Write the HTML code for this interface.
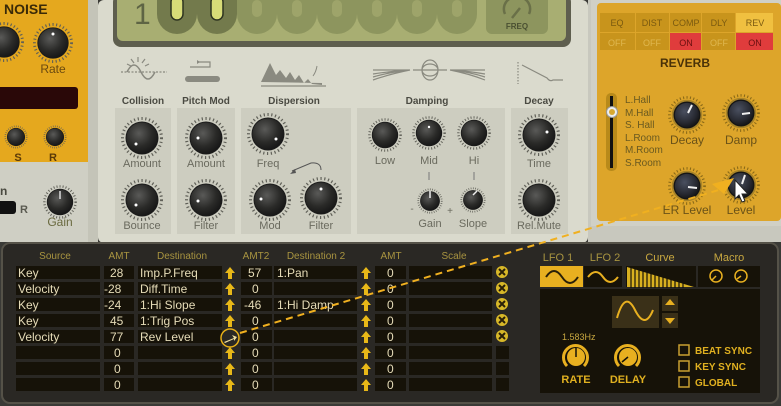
<!DOCTYPE html>
<html><head><meta charset="utf-8"><style>
html,body{margin:0;padding:0;background:#3a3a36;}
svg{display:block}
text{font-family:"Liberation Sans",sans-serif;}
.lb{font-size:11px;fill:#6a6a5e;text-anchor:middle}
.hd{font-size:10px;font-weight:bold;fill:#4a4a42;text-anchor:middle}
.mx{font-family:"Liberation Mono",monospace;font-size:12px;fill:#e6dcb8}
.mh{font-size:10px;fill:#a89440;text-anchor:middle}
.rl{font-size:10px;fill:#6a5a20}
.yl{font-size:11px;fill:#e0b020;font-weight:bold}
</style></head><body>
<svg width="781" height="406" viewBox="0 0 781 406" xmlns="http://www.w3.org/2000/svg">
<defs>
<radialGradient id="kb" cx="0.4" cy="0.35" r="0.7"><stop offset="0" stop-color="#5a5a58"/><stop offset="0.6" stop-color="#2a2a28"/><stop offset="1" stop-color="#151515"/></radialGradient>
<radialGradient id="kr" cx="0.4" cy="0.35" r="0.7"><stop offset="0" stop-color="#4a5060"/><stop offset="0.7" stop-color="#262830"/><stop offset="1" stop-color="#141414"/></radialGradient>
<g id="k"><circle r="19.5" fill="none" stroke="#606058" stroke-width="3" stroke-dasharray="1.2 2.6"/><circle r="16.5" fill="#1a1a1a"/><circle r="15.5" fill="url(#kb)"/></g>
<g id="ky"><circle r="19.5" fill="none" stroke="#8a6a18" stroke-width="3" stroke-dasharray="1.2 2.6"/><circle r="17" fill="#a88428"/><circle r="15" fill="#151515"/><circle r="13.5" fill="url(#kr)"/></g>
</defs>
<rect width="781" height="406" fill="#3a3a36"/>
<rect x="0" y="0" width="98" height="242" fill="#cfcfc4"/>
<rect x="0" y="0" width="88" height="162" fill="#e5a81e"/>
<rect x="88" y="0" width="10" height="242" fill="#c4c4b8"/>
<text x="4" y="14" style="font-size:14px;font-weight:bold;fill:#3a2a08">NOISE</text>
<use href="#k" transform="translate(4,42) scale(0.95)"/>
<use href="#k" transform="translate(53,43) scale(0.95)"/>
<circle cx="53" cy="34" r="1.5" fill="#fff"/>
<text x="53" y="73" class="lb" style="fill:#6a4a10;font-size:12px">Rate</text>
<rect x="-4" y="87" width="82" height="22" rx="3" fill="#2a0808"/>
<use href="#k" transform="translate(16,137) scale(0.55)"/>
<use href="#k" transform="translate(55,137) scale(0.55)"/>
<text x="18" y="161" class="lb" style="fill:#5a3a08;font-weight:bold">S</text>
<text x="53" y="161" class="lb" style="fill:#5a3a08;font-weight:bold">R</text>
<text x="0" y="195" style="font-size:12px;font-weight:bold;fill:#4a4a40">n</text>
<rect x="-4" y="201" width="20" height="13" rx="3" fill="#111"/>
<text x="20" y="213" style="font-size:11px;font-weight:bold;fill:#5a5a50">R</text>
<use href="#k" transform="translate(60,202) scale(0.8)"/>
<line x1="60" y1="191" x2="60" y2="199" stroke="#ddd" stroke-width="1.5"/>
<text x="60" y="226" class="lb" style="fill:#6a6a40;font-size:12px">Gain</text>
<rect x="588" y="0" width="193" height="242" fill="#c8c8be"/>
<rect x="98" y="0" width="490" height="243" rx="6" fill="#dadacd"/>
<rect x="113" y="-6" width="458" height="53" rx="8" fill="#5e5e4e"/>
<rect x="117" y="-6" width="449" height="47" rx="6" fill="#a8ae72"/>
<text x="134" y="24" style="font-size:30px;fill:#5e6444">1</text>
<g fill="#8d955e">
<path d="M237 0h40v14a20 20 0 0 1-40 0z"/><path d="M277 0h40v14a20 20 0 0 1-40 0z"/><path d="M317 0h40v14a20 20 0 0 1-40 0z"/><path d="M357 0h40v14a20 20 0 0 1-40 0z"/><path d="M397 0h40v14a20 20 0 0 1-40 0z"/><path d="M437 0h40v14a20 20 0 0 1-40 0z"/>
</g>
<g fill="#9ea46a"><rect x="252" y="0" width="10" height="17" rx="5"/><rect x="292" y="0" width="10" height="17" rx="5"/><rect x="332" y="0" width="10" height="17" rx="5"/><rect x="372" y="0" width="10" height="17" rx="5"/><rect x="412" y="0" width="10" height="17" rx="5"/><rect x="452" y="0" width="10" height="17" rx="5"/></g>
<path d="M157 0h40v14a20 20 0 0 1-40 0z" fill="#737a4c"/><path d="M197 0h40v14a20 20 0 0 1-40 0z" fill="#737a4c"/>
<rect x="171" y="-4" width="12" height="24" rx="6" fill="#d8dc78" stroke="#2e3420" stroke-width="1.5"/>
<rect x="211" y="-4" width="12" height="24" rx="6" fill="#d8dc78" stroke="#2e3420" stroke-width="1.5"/>
<rect x="486" y="-6" width="62" height="40" rx="6" fill="#8d955e"/>
<path d="M505 14a12 12 0 0 1 6-16M529 14a12 12 0 0 0-6-16M512 18l8-10" stroke="#6a7048" stroke-width="2.5" fill="none"/>
<text x="517" y="29" style="font-size:8px;font-weight:bold;fill:#4a5032" text-anchor="middle">FREQ</text>
<g stroke="#8a8a80" fill="none" stroke-width="1.2">
<path d="M121 72h46" stroke-dasharray="2 1.5"/><path d="M127 72q7-14 14 0t14 0" stroke-width="1.5"/>
<path d="M138 62v-5M134 63l-3-4M142 63l3-4M131 66l-4-2M145 66l4-2"/>
<path d="M190 67h20v-5h-13" />
<path d="M410 70H373M410 70Q392 71 373 74M410 70Q390 72 373 77M410 70Q390 74 373 80"/>
<path d="M413 70h34M422 70a8 6 0 0 1 16 0a8 6 0 0 1-16 0M422 70a8 10 0 0 1 16 0a8 10 0 0 1-16 0"/>
<path d="M450 70h35M450 70Q468 71 485 74M450 70Q470 72 485 77M450 70Q470 74 485 80"/>
<path d="M518 62v22" stroke-dasharray="1.5 1.5"/><path d="M522 65l25 13q3 4 6 2h10" />
<path d="M261 86h65" /></g>
<path d="M200 62l-3-2v4z" fill="#8a8a80"/>
<rect x="185" y="76" width="35" height="6" rx="3" fill="#8a8a80"/>
<path d="M261 82l9-19l6 12l4-5l6 8l4-6l5 8l4-5l5 8l4-4l4 5l10 1v-2z" fill="#8a8a80"/>
<path d="M313 76q3-4 4-10" stroke="#8a8a80" fill="none"/>
<text x="143" y="104" class="hd">Collision</text>
<text x="206" y="104" class="hd">Pitch Mod</text>
<text x="294" y="104" class="hd">Dispersion</text>
<text x="427" y="104" class="hd">Damping</text>
<text x="539" y="104" class="hd">Decay</text>
<g fill="#cdcdc0">
<rect x="115" y="108" width="56" height="126"/><rect x="177" y="108" width="58" height="126"/><rect x="241" y="108" width="110" height="126"/><rect x="357" y="108" width="148" height="126"/><rect x="511" y="108" width="57" height="126"/>
</g>
<use href="#k" transform="translate(142,138)"/><use href="#k" transform="translate(142,200)"/>
<use href="#k" transform="translate(206,138)"/><use href="#k" transform="translate(206,200)"/>
<use href="#k" transform="translate(268,134)"/><use href="#k" transform="translate(270,200)"/><use href="#k" transform="translate(321,198)"/>
<use href="#k" transform="translate(385,135) scale(0.8)"/><use href="#k" transform="translate(429,133) scale(0.8)"/><use href="#k" transform="translate(474,133) scale(0.8)"/>
<use href="#k" transform="translate(430,201) scale(0.6)"/><use href="#k" transform="translate(473,200) scale(0.6)"/>
<use href="#k" transform="translate(539,135)"/><use href="#k" transform="translate(539,200)"/>
<g fill="#fff"><circle cx="136" cy="144" r="1.5"/><circle cx="136" cy="205" r="1.5"/><circle cx="198" cy="138" r="1.5"/><circle cx="198" cy="201" r="1.5"/><circle cx="276" cy="139" r="1.5"/><circle cx="261" cy="199" r="1.5"/><circle cx="321" cy="189" r="1.5"/><circle cx="429" cy="127" r="1.2"/><circle cx="547" cy="132" r="1.5"/></g>
<path d="M430 191v7M473 195l4-4" stroke="#eee" stroke-width="1.5"/>
<text x="142" y="167" class="lb">Amount</text><text x="142" y="229" class="lb">Bounce</text>
<text x="206" y="167" class="lb">Amount</text><text x="206" y="229" class="lb">Filter</text>
<text x="268" y="167" class="lb">Freq</text><text x="270" y="229" class="lb">Mod</text><text x="321" y="229" class="lb">Filter</text>
<path d="M321 170q0-8-10-7l-19 8" stroke="#555" fill="none"/><path d="M290 174l5-5l1 4z" fill="#555"/>
<text x="385" y="164" class="lb">Low</text><text x="429" y="164" class="lb">Mid</text><text x="474" y="164" class="lb">Hi</text>
<path d="M429 180v-8M474 180v-8" stroke="#777"/>
<text x="412" y="212" class="lb" style="font-size:10px">-</text><text x="450" y="214" class="lb" style="font-size:10px">+</text>
<text x="430" y="227" class="lb">Gain</text><text x="473" y="227" class="lb">Slope</text>
<text x="539" y="167" class="lb">Time</text><text x="539" y="229" class="lb">Rel.Mute</text>
<rect x="591" y="0" width="190" height="226" fill="#d0d0c6"/>
<rect x="597" y="3" width="184" height="218" rx="4" fill="#dda52a"/>
<g style="font-size:9px" text-anchor="middle">
<rect x="600" y="13" width="35" height="19" fill="#c8941c"/><text x="617" y="26" fill="#7a5a10">EQ</text>
<rect x="636" y="13" width="33" height="19" fill="#c8941c"/><text x="652" y="26" fill="#7a5a10">DIST</text>
<rect x="670" y="13" width="31" height="19" fill="#c8941c"/><text x="686" y="26" fill="#7a5a10">COMP</text>
<rect x="702" y="13" width="33" height="19" fill="#c8941c"/><text x="719" y="26" fill="#7a5a10">DLY</text>
<rect x="736" y="13" width="37" height="19" fill="#f0c040"/><text x="755" y="26" fill="#7a5a10">REV</text>
<rect x="600" y="33" width="35" height="17" fill="#c8941c"/><text x="617" y="46" fill="#e0b850">OFF</text>
<rect x="636" y="33" width="33" height="17" fill="#c8941c"/><text x="652" y="46" fill="#e0b850">OFF</text>
<rect x="670" y="33" width="31" height="17" fill="#e03c3c"/><text x="686" y="46" fill="#6a1010">ON</text>
<rect x="702" y="33" width="33" height="17" fill="#c8941c"/><text x="719" y="46" fill="#e0b850">OFF</text>
<rect x="736" y="33" width="37" height="17" fill="#e03c3c"/><text x="755" y="46" fill="#6a1010">ON</text>
</g>
<text x="685" y="67" style="font-size:12px;font-weight:bold;fill:#4a3208" text-anchor="middle">REVERB</text>
<rect x="606" y="93" width="11" height="78" rx="5" fill="#b88a1a"/><rect x="610" y="96" width="3" height="72" fill="#111"/>
<circle cx="612" cy="112" r="5.5" fill="#eee" stroke="#999"/><circle cx="612" cy="112" r="3" fill="#d8a830"/>
<text x="625" y="103" class="rl">L.Hall</text><text x="625" y="116" class="rl">M.Hall</text><text x="625" y="128" class="rl">S. Hall</text><text x="625" y="141" class="rl">L.Room</text><text x="625" y="153" class="rl">M.Room</text><text x="625" y="166" class="rl">S.Room</text>
<use href="#ky" transform="translate(687,115) scale(0.9)"/><use href="#ky" transform="translate(741,113) scale(0.9)"/>
<use href="#ky" transform="translate(687,186) scale(0.9)"/><use href="#ky" transform="translate(741,185) scale(0.9)"/>
<path d="M688 113l4-8M742 114l8-1M688 187l9 1M742 184l3-9" stroke="#eee" stroke-width="2"/>
<text x="687" y="144" class="lb" style="fill:#6a5218;font-size:12px">Decay</text><text x="741" y="144" class="lb" style="fill:#6a5218;font-size:12px">Damp</text>
<text x="687" y="214" class="lb" style="fill:#6a5218;font-size:12px">ER Level</text><text x="741" y="214" class="lb" style="fill:#6a5218;font-size:12px">Level</text>
<rect x="2" y="243" width="776" height="160" rx="8" fill="#2a2824" stroke="#555248" stroke-width="2"/>
<text x="55" y="259" class="mh">Source</text><text x="119" y="259" class="mh">AMT</text><text x="182" y="259" class="mh">Destination</text><text x="256" y="259" class="mh">AMT2</text><text x="316" y="259" class="mh">Destination 2</text><text x="391" y="259" class="mh">AMT</text><text x="454" y="259" class="mh">Scale</text>
<g fill="#161208">
<rect x="16" y="266" width="84" height="13"/><rect x="104" y="266" width="30" height="13"/><rect x="138" y="266" width="84" height="13"/><rect x="241" y="266" width="31" height="13"/><rect x="274" y="266" width="83" height="13"/><rect x="375" y="266" width="31" height="13"/><rect x="409" y="266" width="83" height="13"/>
</g>
<g id="rows" fill="#161208">
<rect x="16" y="282" width="84" height="13"/><rect x="104" y="282" width="30" height="13"/><rect x="138" y="282" width="84" height="13"/><rect x="241" y="282" width="31" height="13"/><rect x="274" y="282" width="83" height="13"/><rect x="375" y="282" width="31" height="13"/><rect x="409" y="282" width="83" height="13"/>
</g>
<use href="#rows" y="16"/><use href="#rows" y="32"/><use href="#rows" y="48"/><use href="#rows" y="64"/><use href="#rows" y="80"/><use href="#rows" y="96"/>
<g fill="#161208"><rect x="496" y="346" width="13" height="13"/><rect x="496" y="362" width="13" height="13"/><rect x="496" y="378" width="13" height="13"/></g>
<g class="mx">
<text x="18" y="277">Key</text><text x="110" y="277">28</text><text x="140" y="277">Imp.P.Freq</text><text x="248" y="277">57</text><text x="277" y="277">1:Pan</text><text x="387" y="277">0</text>
<text x="18" y="293">Velocity</text><text x="104" y="293">-28</text><text x="140" y="293">Diff.Time</text><text x="252" y="293">0</text><text x="387" y="293">0</text>
<text x="18" y="309">Key</text><text x="104" y="309">-24</text><text x="140" y="309">1:Hi Slope</text><text x="244" y="309">-46</text><text x="277" y="309">1:Hi Damp</text><text x="387" y="309">0</text>
<text x="18" y="325">Key</text><text x="110" y="325">45</text><text x="140" y="325">1:Trig Pos</text><text x="252" y="325">0</text><text x="387" y="325">0</text>
<text x="18" y="341">Velocity</text><text x="110" y="341">77</text><text x="140" y="341">Rev Level</text><text x="252" y="341">0</text><text x="387" y="341">0</text>
<text x="114" y="357">0</text><text x="252" y="357">0</text><text x="387" y="357">0</text>
<text x="114" y="373">0</text><text x="252" y="373">0</text><text x="387" y="373">0</text>
<text x="114" y="389">0</text><text x="252" y="389">0</text><text x="387" y="389">0</text>
</g>
<g id="ar" fill="#e8b818"><path d="M230 267l-5 6h3v6h4v-6h3z"/><path d="M366 267l-5 6h3v6h4v-6h3z"/></g>
<use href="#ar" y="16"/><use href="#ar" y="32"/><use href="#ar" y="48"/><use href="#ar" y="80"/><use href="#ar" y="96"/><use href="#ar" y="112"/>
<path d="M366 331l-5 6h3v6h4v-6h3z" fill="#e8b818"/>
<path d="M224 342l10-4l-2-3l5 2l-3 4v-2l-9 4z" fill="#f0e0a0"/>
<circle cx="230" cy="338" r="9" fill="none" stroke="#e8b018" stroke-width="1.5"/>
<g id="xb"><circle cx="502" cy="272" r="6" fill="#d8b828"/><path d="M499 269l6 6M505 269l-6 6" stroke="#2a2008" stroke-width="2"/></g>
<use href="#xb" y="16"/><use href="#xb" y="32"/><use href="#xb" y="48"/><use href="#xb" y="64"/>
<text x="558" y="261" class="mh" style="font-size:11px">LFO 1</text><text x="605" y="261" class="mh" style="font-size:11px">LFO 2</text><text x="660" y="261" class="mh" style="font-size:11px;fill:#c8a840">Curve</text><text x="729" y="261" class="mh" style="font-size:11px;fill:#c8a840">Macro</text>
<rect x="540" y="266" width="43" height="21" fill="#e8b020"/><rect x="584" y="266" width="38" height="21" fill="#161208"/><rect x="626" y="266" width="70" height="21" fill="#161208"/><rect x="698" y="266" width="62" height="21" fill="#161208"/>
<path d="M546 277q8-12 16 0t16 0" stroke="#2a2008" stroke-width="2" fill="none"/><path d="M588 277q8-10 15 0t15 0" stroke="#e8b020" stroke-width="2" fill="none"/>
<path d="M627 267v20h67z" fill="#d8b020"/>
<g stroke="#161208" stroke-width="1.2"><path d="M631 266v22M635 266v22M639 266v22M643 266v22M647 266v22M651 266v22M655 266v22M659 266v22M663 266v22M667 266v22M671 266v22M675 266v22M679 266v22M683 266v22"/></g>
<circle cx="716" cy="276" r="6" fill="none" stroke="#e8b020" stroke-width="1.5"/><path d="M716 276l-4 4" stroke="#e8b020" stroke-width="1.5"/>
<circle cx="741" cy="276" r="6" fill="none" stroke="#e8b020" stroke-width="1.5"/><path d="M741 276l-4 3" stroke="#e8b020" stroke-width="1.5"/>
<rect x="540" y="289" width="220" height="104" fill="#161208"/>
<rect x="612" y="296" width="47" height="32" fill="#3a3018"/><path d="M617 318q8-28 18-8t18 0" stroke="#e8b020" stroke-width="2" fill="none"/>
<rect x="662" y="296" width="16" height="15" fill="#3a3018"/><rect x="662" y="313" width="16" height="15" fill="#3a3018"/>
<path d="M670 299l-5 6h10z" fill="#e8b020"/><path d="M670 324l-5-6h10z" fill="#e8b020"/>
<text x="562" y="340" style="font-size:9px;fill:#c8a840">1.583Hz</text>
<path d="M567 366a12 12 0 1 1 17 0" stroke="#e8b020" stroke-width="3" fill="none"/><circle cx="576" cy="357" r="9" fill="#e8b020"/><path d="M576 357v-9" stroke="#161208" stroke-width="1.5"/>
<path d="M619 366a12 12 0 1 1 17 0" stroke="#e8b020" stroke-width="3" fill="none"/><circle cx="628" cy="357" r="9" fill="#e8b020"/><path d="M628 357l-6 5" stroke="#161208" stroke-width="1.5"/>
<text x="576" y="383" class="yl" text-anchor="middle">RATE</text><text x="628" y="383" class="yl" text-anchor="middle">DELAY</text>
<rect x="679" y="345" width="10" height="10" fill="none" stroke="#c8a030" stroke-width="1.5"/><rect x="679" y="361" width="10" height="10" fill="none" stroke="#c8a030" stroke-width="1.5"/><rect x="679" y="377" width="10" height="10" fill="none" stroke="#c8a030" stroke-width="1.5"/>
<text x="695" y="354" class="yl" style="font-size:10px">BEAT SYNC</text><text x="695" y="370" class="yl" style="font-size:10px">KEY SYNC</text><text x="695" y="386" class="yl" style="font-size:10px">GLOBAL</text>
<path d="M240 333L722 189" stroke="#f0b020" stroke-width="2" stroke-dasharray="7 5" fill="none"/>
<path d="M712 184l22-6l-10 16z" fill="#f0b020"/>
<path d="M735 180v19l4-4l3 7l3-1l-3-7h6z" fill="#fff" stroke="#222" stroke-width="1"/>
</svg>
</body></html>
